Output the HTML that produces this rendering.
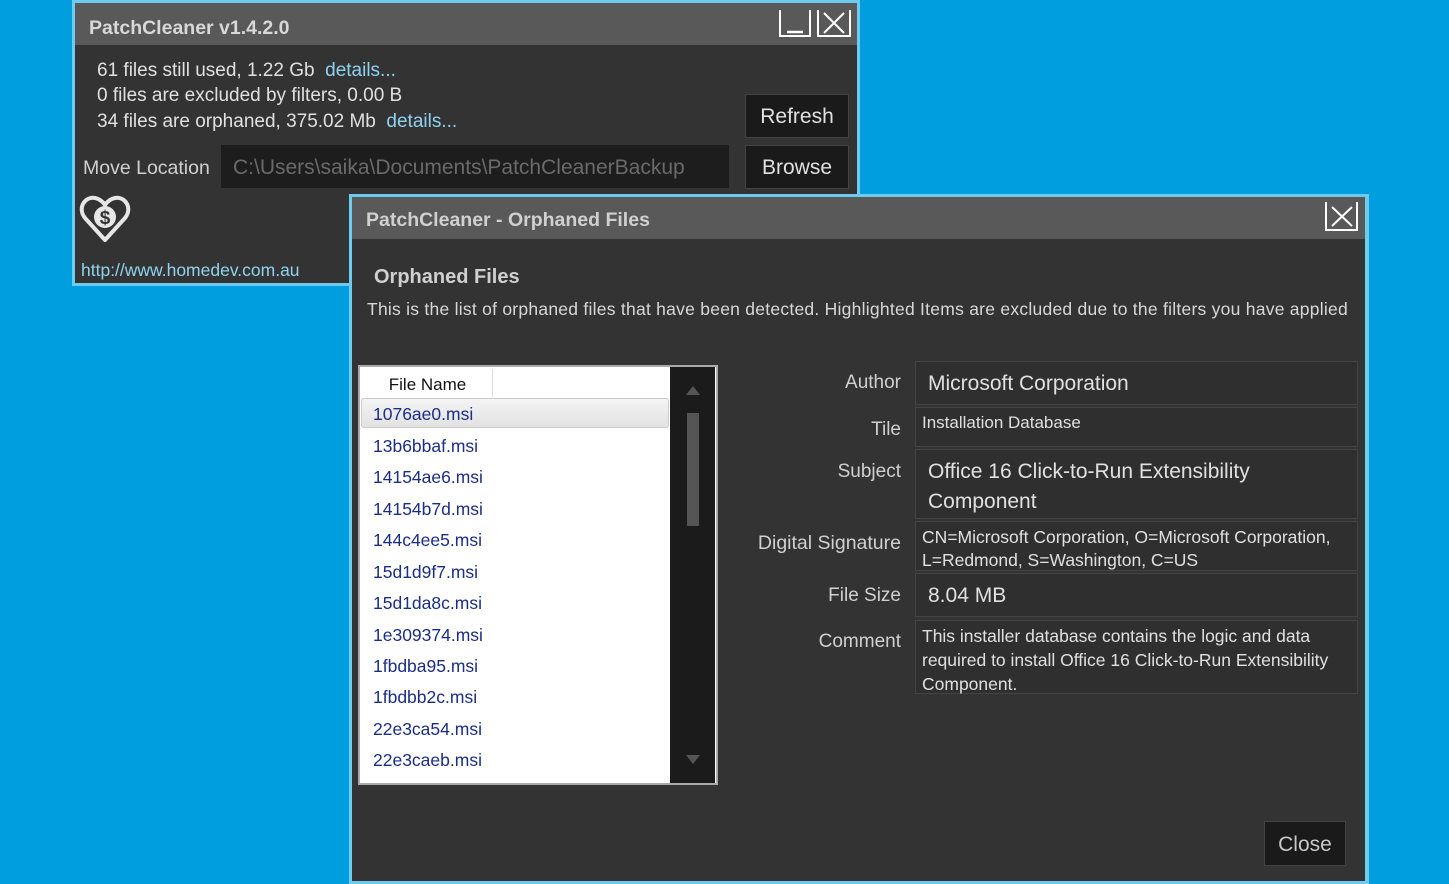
<!DOCTYPE html>
<html><head><meta charset="utf-8"><style>
*{margin:0;padding:0;box-sizing:border-box}
body{width:1449px;height:884px;background:#009ddf;position:relative;overflow:hidden;font-family:"Liberation Sans",sans-serif;}
.a{position:absolute;white-space:nowrap}
.t{color:#e0e0e0;font-size:19px}
.lnk{color:#8fd3f0}
.lbl{color:#d0d0d0;font-size:19px;text-align:right;width:160px}
.box{position:absolute;border:1px solid #444;background:#2f2f2f;color:#e0e0e0;}
.row{position:absolute;left:13px;color:#1b2d86;font-size:17.5px}
</style></head><body>
<!-- main window -->
<div class="a" style="left:72px;top:0;width:788px;height:286px;background:#6ccbef"></div>
<div class="a" style="left:75px;top:3px;width:782px;height:280px;background:#333"></div>
<div class="a" style="left:75px;top:3px;width:782px;height:42px;background:#595959"></div>
<div class="a" style="left:89px;top:17px;color:#d8d8d8;font-size:19.5px;font-weight:bold">PatchCleaner v1.4.2.0</div>
<svg class="a" style="left:778px;top:8px" width="76" height="30">
<path d="M2 2V28H32V2" stroke="#fff" stroke-width="2" fill="none"/><path d="M9 24H25" stroke="#fff" stroke-width="2.5"/>
<path d="M40 2V28H72V2" stroke="#fff" stroke-width="2" fill="none"/><path d="M46 5L66 25M66 5L46 25" stroke="#fff" stroke-width="2"/></svg>
<div class="a t" style="left:97px;top:60px">61 files still used, 1.22 Gb &nbsp;<span class="lnk">details...</span></div>
<div class="a t" style="left:97px;top:85px">0 files are excluded by filters, 0.00 B</div>
<div class="a t" style="left:97px;top:111px">34 files are orphaned, 375.02 Mb &nbsp;<span class="lnk">details...</span></div>
<div class="a" style="left:745px;top:94px;width:104px;height:44px;background:#1a1a1a;border:1px solid #444;color:#e0e0e0;font-size:21px;text-align:center;line-height:43px">Refresh</div>
<div class="a" style="left:745px;top:145px;width:104px;height:44px;background:#1a1a1a;border:1px solid #444;color:#e0e0e0;font-size:21px;text-align:center;line-height:43px">Browse</div>
<div class="a t" style="left:83px;top:157px;color:#d0d0d0;font-size:19.5px">Move Location</div>
<div class="a" style="left:221px;top:145px;width:508px;height:43px;background:#1d1d1d;color:#6a6a6a;font-size:21px;padding-left:12px;line-height:45px">C:\Users\saika\Documents\PatchCleanerBackup</div>
<svg class="a" style="left:79px;top:193px" width="52" height="52">
<path d="M26 47L6 25C-2 15 6 3 16 5C21 6 24 9 26 12C28 9 31 6 36 5C46 3 54 15 46 25Z" stroke="#e6e6e6" stroke-width="4" fill="none" stroke-linejoin="round"/>
<circle cx="26" cy="24" r="11" fill="#e6e6e6"/>
<text x="26" y="31" font-size="19" font-weight="bold" fill="#333" text-anchor="middle" font-family="Liberation Sans">$</text></svg>
<div class="a" style="left:81px;top:260px;color:#8fd3f0;font-size:17.5px">http://www.homedev.com.au</div>

<!-- second window -->
<div class="a" style="left:349px;top:194px;width:1020px;height:690px;background:#6ccbef"></div>
<div class="a" style="left:352px;top:197px;width:1013px;height:684px;background:#333"></div>
<div class="a" style="left:352px;top:197px;width:1013px;height:42px;background:#595959"></div>
<div class="a" style="left:366px;top:209px;color:#d0d0d0;font-size:19.5px;font-weight:bold">PatchCleaner - Orphaned Files</div>
<svg class="a" style="left:1324px;top:202px" width="36" height="30"><path d="M2 0V28H33V0" stroke="#fff" stroke-width="2" fill="none"/><path d="M8 5L28 24M28 5L8 24" stroke="#fff" stroke-width="2"/></svg>
<div class="a" style="left:374px;top:266px;color:#d0d0d0;font-size:20px;font-weight:bold">Orphaned Files</div>
<div class="a" style="left:367px;top:299px;color:#d8d8d8;font-size:17.5px;letter-spacing:0.25px">This is the list of orphaned files that have been detected. Highlighted Items are excluded due to the filters you have applied</div>

<!-- list -->
<div class="a" style="left:358px;top:365px;width:360px;height:420px;background:#aaa;"></div>
<div class="a" style="left:360px;top:367px;width:356px;height:416px;background:#fff;overflow:hidden">
 <div class="a" style="left:3px;top:2px;width:130px;height:28px;border-right:1px solid #ddd;color:#111;font-size:17px;text-align:center;line-height:32px">File Name</div>
 <div class="a" style="left:1px;top:31px;width:308px;height:30px;background:linear-gradient(#f4f4f4,#e2e2e2);border:1px solid #ccc;border-radius:3px"></div>
 <div class="row" style="top:37px">1076ae0.msi</div>
 <div class="row" style="top:69px">13b6bbaf.msi</div>
 <div class="row" style="top:100px">14154ae6.msi</div>
 <div class="row" style="top:132px">14154b7d.msi</div>
 <div class="row" style="top:163px">144c4ee5.msi</div>
 <div class="row" style="top:195px">15d1d9f7.msi</div>
 <div class="row" style="top:226px">15d1da8c.msi</div>
 <div class="row" style="top:258px">1e309374.msi</div>
 <div class="row" style="top:289px">1fbdba95.msi</div>
 <div class="row" style="top:320px">1fbdbb2c.msi</div>
 <div class="row" style="top:352px">22e3ca54.msi</div>
 <div class="row" style="top:383px">22e3caeb.msi</div>
 <div class="a" style="left:310px;top:0;width:45px;height:416px;background:#1b1b1b"></div>
 <div class="a" style="left:327px;top:46px;width:12px;height:113px;background:#555"></div>
 <div class="a" style="left:326px;top:19px;width:0;height:0;border-left:7px solid transparent;border-right:7px solid transparent;border-bottom:9px solid #555"></div>
 <div class="a" style="left:326px;top:388px;width:0;height:0;border-left:7px solid transparent;border-right:7px solid transparent;border-top:9px solid #555"></div>
</div>

<!-- details -->
<div class="a lbl" style="left:741px;top:372px">Author</div>
<div class="a lbl" style="left:741px;top:419px">Tile</div>
<div class="a lbl" style="left:741px;top:461px">Subject</div>
<div class="a lbl" style="left:741px;top:532px;font-size:19.5px">Digital Signature</div>
<div class="a lbl" style="left:741px;top:585px">File Size</div>
<div class="a lbl" style="left:741px;top:631px">Comment</div>
<div class="box" style="left:915px;top:361px;width:443px;height:44px;font-size:21px;padding:10px 12px">Microsoft Corporation</div>
<div class="box" style="left:915px;top:407px;width:443px;height:40px;font-size:17px;padding:5px 6px">Installation Database</div>
<div class="box" style="left:915px;top:449px;width:443px;height:70px;font-size:21px;padding:7px 12px;line-height:30px;white-space:normal">Office 16 Click-to-Run Extensibility Component</div>
<div class="box" style="left:915px;top:521px;width:443px;height:50px;font-size:17.5px;padding:4px 6px;line-height:23px;white-space:normal">CN=Microsoft Corporation, O=Microsoft Corporation, L=Redmond, S=Washington, C=US</div>
<div class="box" style="left:915px;top:573px;width:443px;height:44px;font-size:21px;padding:10px 12px">8.04 MB</div>
<div class="box" style="left:915px;top:620px;width:443px;height:74px;font-size:17.5px;padding:3px 6px;line-height:24px;white-space:normal">This installer database contains the logic and data required to install Office 16 Click-to-Run Extensibility Component.</div>

<div class="a" style="left:1264px;top:821px;width:82px;height:45px;background:#1a1a1a;border:1px solid #444;color:#c8c8c8;font-size:21px;text-align:center;line-height:45px">Close</div>
</body></html>
